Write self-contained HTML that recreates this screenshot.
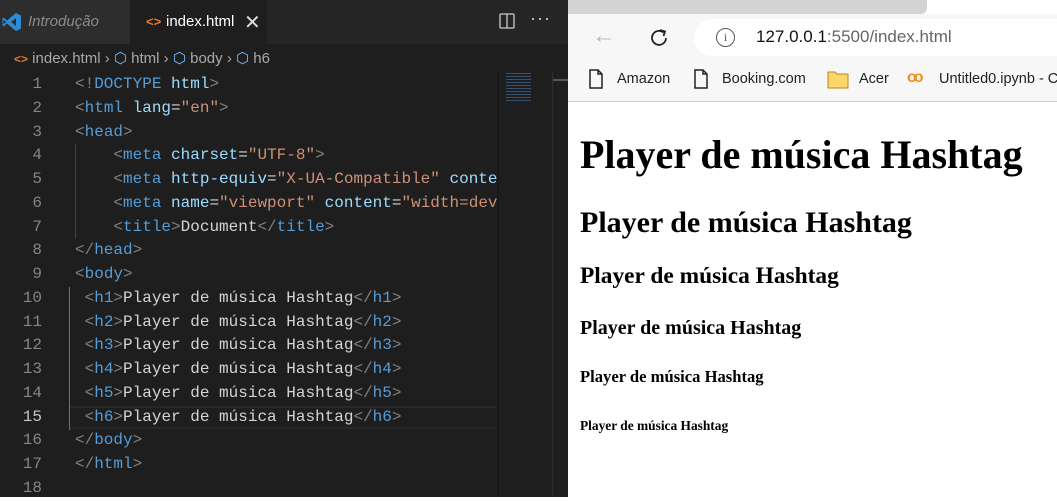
<!DOCTYPE html>
<html><head><meta charset="utf-8"><style>
*{margin:0;padding:0;box-sizing:border-box}
body{width:1057px;height:497px;overflow:hidden;position:relative;background:#fff;font-family:"Liberation Sans",sans-serif}
.vs{position:absolute;left:0;top:0;width:568px;height:497px;background:#1e1e1e}
.tabs{position:absolute;left:0;top:0;width:568px;height:44px;background:#252526}
.t1{position:absolute;left:0;top:0;width:130px;height:44px;background:#2d2d2d;color:#8b8b8b;font-style:italic;font-size:15px;line-height:44px;padding-left:28px}
.t2{position:absolute;left:130px;top:0;width:137px;height:44px;background:#1e1e1e;color:#fff;font-size:15px;line-height:44px;padding-left:36px}
.crumb{position:absolute;left:14px;top:47px;color:#a9a9a9;font-size:15px;line-height:24px;white-space:nowrap}
.code{position:absolute;left:0;top:73px;width:497px;height:430px;overflow:hidden;font-family:"Liberation Mono",monospace;font-size:16px}
.ln{height:23.76px;line-height:23.76px;white-space:pre;position:relative}
.n{position:absolute;left:0;width:42px;text-align:right;color:#858585}
.c{position:absolute;left:75px;color:#d4d4d4}
.p{color:#808080}.g{color:#569cd6}.a{color:#9cdcfe}.s{color:#ce9178}
.br{position:absolute;left:568px;top:0;width:489px;height:497px;background:#fff}
.h{position:absolute;left:580px;font-family:"Liberation Serif",serif;font-weight:bold;line-height:1;white-space:nowrap;color:#000}
</style></head><body>
<div class="vs">
<div class="tabs"></div>
<div class="t1">Introdução</div>
<svg style="position:absolute;left:2px;top:12px" width="20" height="20" viewBox="0 0 20 20"><path d="M14 1 L19 3.5 V16.5 L14 19 L5 11.5 L1.5 14.5 L0.5 13.5 V6.5 L1.5 5.5 L5 8.5 Z M14 6 L9 10 L14 14 Z M1.5 7.5 V12.5 L4 10 Z" fill="#2c8dd6"/></svg>
<div class="t2">index.html</div>
<div style="position:absolute;left:146px;top:14px;color:#e37933;font-size:13px;font-weight:bold">&lt;&gt;</div>
<div style="position:absolute;left:244px;top:10px;color:#ddd;font-size:20px">✕</div>
<svg style="position:absolute;left:498px;top:12px" width="18" height="18" viewBox="0 0 18 18"><rect x="2" y="2" width="14" height="14" rx="1" fill="none" stroke="#ccc" stroke-width="1.3"/><line x1="9" y1="2" x2="9" y2="16" stroke="#ccc" stroke-width="1.3"/></svg>
<div style="position:absolute;left:530px;top:8px;color:#ccc;font-size:18px;letter-spacing:1px">···</div>
<div class="crumb"><span style="color:#e37933;font-weight:bold;font-size:12px">&lt;&gt;</span> index.html › <span style="color:#75beff">⬡</span> html › <span style="color:#75beff">⬡</span> body › <span style="color:#75beff">⬡</span> h6</div>
<div class="code">
<div class="ln"><span class="n">1</span><span class="c"><span class="p">&lt;!</span><span class="g">DOCTYPE</span> <span class="a">html</span><span class="p">&gt;</span></span></div>
<div class="ln"><span class="n">2</span><span class="c"><span class="p">&lt;</span><span class="g">html</span> <span class="a">lang</span>=<span class="s">"en"</span><span class="p">&gt;</span></span></div>
<div class="ln"><span class="n">3</span><span class="c"><span class="p">&lt;</span><span class="g">head</span><span class="p">&gt;</span></span></div>
<div class="ln"><span class="n">4</span><span class="c">    <span class="p">&lt;</span><span class="g">meta</span> <span class="a">charset</span>=<span class="s">"UTF-8"</span><span class="p">&gt;</span></span></div>
<div class="ln"><span class="n">5</span><span class="c">    <span class="p">&lt;</span><span class="g">meta</span> <span class="a">http-equiv</span>=<span class="s">"X-UA-Compatible"</span> <span class="a">content</span></span></div>
<div class="ln"><span class="n">6</span><span class="c">    <span class="p">&lt;</span><span class="g">meta</span> <span class="a">name</span>=<span class="s">"viewport"</span> <span class="a">content</span>=<span class="s">"width=device</span></span></div>
<div class="ln"><span class="n">7</span><span class="c">    <span class="p">&lt;</span><span class="g">title</span><span class="p">&gt;</span>Document<span class="p">&lt;/</span><span class="g">title</span><span class="p">&gt;</span></span></div>
<div class="ln"><span class="n">8</span><span class="c"><span class="p">&lt;/</span><span class="g">head</span><span class="p">&gt;</span></span></div>
<div class="ln"><span class="n">9</span><span class="c"><span class="p">&lt;</span><span class="g">body</span><span class="p">&gt;</span></span></div>
<div class="ln"><span class="n">10</span><span class="c"> <span class="p">&lt;</span><span class="g">h1</span><span class="p">&gt;</span>Player de música Hashtag<span class="p">&lt;/</span><span class="g">h1</span><span class="p">&gt;</span></span></div>
<div class="ln"><span class="n">11</span><span class="c"> <span class="p">&lt;</span><span class="g">h2</span><span class="p">&gt;</span>Player de música Hashtag<span class="p">&lt;/</span><span class="g">h2</span><span class="p">&gt;</span></span></div>
<div class="ln"><span class="n">12</span><span class="c"> <span class="p">&lt;</span><span class="g">h3</span><span class="p">&gt;</span>Player de música Hashtag<span class="p">&lt;/</span><span class="g">h3</span><span class="p">&gt;</span></span></div>
<div class="ln"><span class="n">13</span><span class="c"> <span class="p">&lt;</span><span class="g">h4</span><span class="p">&gt;</span>Player de música Hashtag<span class="p">&lt;/</span><span class="g">h4</span><span class="p">&gt;</span></span></div>
<div class="ln"><span class="n">14</span><span class="c"> <span class="p">&lt;</span><span class="g">h5</span><span class="p">&gt;</span>Player de música Hashtag<span class="p">&lt;/</span><span class="g">h5</span><span class="p">&gt;</span></span></div>
<div class="ln" style="border-top:2px solid #282828;border-bottom:2px solid #282828;margin-left:70px;height:23.76px"><span class="n" style="left:-70px;color:#c6c6c6;top:-2px">15</span><span class="c" style="left:5px;top:-2px"> <span class="p">&lt;</span><span class="g">h6</span><span class="p">&gt;</span>Player de música Hashtag<span class="p">&lt;/</span><span class="g">h6</span><span class="p">&gt;</span></span></div>
<div class="ln"><span class="n">16</span><span class="c"><span class="p">&lt;/</span><span class="g">body</span><span class="p">&gt;</span></span></div>
<div class="ln"><span class="n">17</span><span class="c"><span class="p">&lt;/</span><span class="g">html</span><span class="p">&gt;</span></span></div>
<div class="ln"><span class="n">18</span></div>
</div>
<div style="position:absolute;left:75px;top:144px;width:1px;height:95px;background:#404040"></div>
<div style="position:absolute;left:69px;top:287px;width:1px;height:143px;background:#707070"></div>
<div style="position:absolute;left:497px;top:72px;width:2px;height:425px;background:#181818"></div>
<div style="position:absolute;left:506px;top:73px;width:25px;height:30px;background:repeating-linear-gradient(#3a6a9a 0 1px,transparent 1px 3px);opacity:.7"></div>
<div style="position:absolute;left:552px;top:72px;width:1px;height:425px;background:#2e2e2e"></div>
<div style="position:absolute;left:553px;top:79px;width:15px;height:2px;background:#555"></div>
</div>
<div class="br">
<div style="position:absolute;left:0;top:0;width:359px;height:14px;background:#d3d3d3;border-bottom-right-radius:6px"></div>
<div style="position:absolute;left:0;top:14px;width:489px;height:48px;background:#f7f7f7"></div>
<div style="position:absolute;left:0;top:62px;width:489px;height:40px;background:#f7f7f7;border-bottom:1px solid #d0d0d0"></div>
<div style="position:absolute;left:24px;top:22px;color:#bbb;font-size:24px">←</div>
<svg style="position:absolute;left:80px;top:27px" width="22" height="22" viewBox="0 0 22 22"><path d="M18 11 A7 7 0 1 1 15.5 5.5" fill="none" stroke="#222" stroke-width="1.8"/><path d="M12 3 L17 4.5 L15.5 9" fill="none" stroke="#222" stroke-width="1.8"/></svg>
<div style="position:absolute;left:126px;top:19px;width:380px;height:37px;background:#fff;border-radius:19px"></div>
<div style="position:absolute;left:148px;top:28px;width:19px;height:19px;border:1.5px solid #555;border-radius:50%;font-size:12px;text-align:center;line-height:16px;color:#555;font-family:'Liberation Serif',serif">i</div>
<div style="position:absolute;left:188px;top:27px;font-size:17px;color:#111">127.0.0.1<span style="color:#666">:5500/index.html</span></div>
<svg style="position:absolute;left:20px;top:68px" width="16" height="22" viewBox="0 0 16 22"><path d="M2 2 H10 L14 6 V20 H2 Z M10 2 V6 H14" fill="none" stroke="#222" stroke-width="1.5"/></svg>
<div style="position:absolute;left:49px;top:71px;font-size:14.5px;color:#222">Amazon</div>
<svg style="position:absolute;left:125px;top:68px" width="16" height="22" viewBox="0 0 16 22"><path d="M2 2 H10 L14 6 V20 H2 Z M10 2 V6 H14" fill="none" stroke="#222" stroke-width="1.5"/></svg>
<div style="position:absolute;left:154px;top:71px;font-size:14.5px;color:#222">Booking.com</div>
<svg style="position:absolute;left:259px;top:70px" width="22" height="19" viewBox="0 0 22 19"><path d="M1 2 H8 L10 4 H21 V18 H1 Z" fill="#fbd76a" stroke="#b38a1c" stroke-width="1"/></svg>
<div style="position:absolute;left:291px;top:71px;font-size:14.5px;color:#222">Acer</div>
<div style="position:absolute;left:339px;top:69px;font-size:16px;color:#f0901e;font-weight:bold;letter-spacing:-3px">oo</div>
<div style="position:absolute;left:371px;top:71px;font-size:14.5px;color:#222;white-space:nowrap">Untitled0.ipynb - C</div>
</div>
<div class="h" style="top:135px;font-size:40px">Player de música Hashtag</div>
<div class="h" style="top:208px;font-size:30px">Player de música Hashtag</div>
<div class="h" style="top:265px;font-size:23.4px">Player de música Hashtag</div>
<div class="h" style="top:318px;font-size:20px">Player de música Hashtag</div>
<div class="h" style="top:369px;font-size:16.6px">Player de música Hashtag</div>
<div class="h" style="top:419px;font-size:13.4px">Player de música Hashtag</div>
</body></html>
